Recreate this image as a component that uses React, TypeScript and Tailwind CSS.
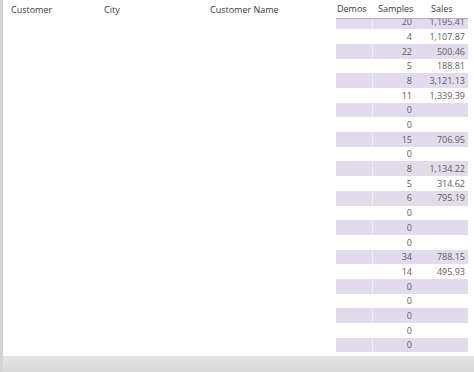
const rows: [string, string][] = [
  ['20', '1,195.41'],
  ['4', '1,107.87'],
  ['22', '500.46'],
  ['5', '188.81'],
  ['8', '3,121.13'],
  ['11', '1,339.39'],
  ['0', ''],
  ['0', ''],
  ['15', '706.95'],
  ['0', ''],
  ['8', '1,134.22'],
  ['5', '314.62'],
  ['6', '795.19'],
  ['0', ''],
  ['0', ''],
  ['0', ''],
  ['34', '788.15'],
  ['14', '495.93'],
  ['0', ''],
  ['0', ''],
  ['0', ''],
  ['0', ''],
  ['0', ''],
]

const cols = 'grid grid-cols-[93px_106px_134px_37px_43px_52px]'

export default function App() {
  return (
    <div
      className="flex w-[474px] h-[372px] bg-white overflow-hidden text-[9px]"
      style={{ fontFamily: '"Open Sans", "Noto Sans", sans-serif' }}
    >
      {/* left frame edge */}
      <div className="w-[3px] h-full bg-[#d4d4d4]" />

      <div className="flex flex-col flex-1">
        <div className="flex flex-col h-[355px]">
          {/* header */}
          <div className={`${cols} h-[19px] items-center text-[#3b3a39]`}>
            <div className="pl-[8px]">Customer</div>
            <div className="pl-[8px]">City</div>
            <div className="pl-[8px]">Customer Name</div>
            <div className="pl-[1px] h-full flex items-center border-b border-[#b5aac8]">Demos</div>
            <div className="pl-[5px] h-full flex items-center border-b border-[#b5aac8]">Samples</div>
            <div className="pl-[15px] h-full flex items-center border-b border-[#b5aac8]">Sales</div>
          </div>

          {/* body, scrolled a few pixels */}
          <div className="flex-1 overflow-hidden">
            <div className="-mt-[4.4px] text-[#605e5c]">
              {rows.map(([samples, sales], i) => {
                const bg = i % 2 === 0 ? 'bg-[#e1dbeb]' : 'bg-white'
                return (
                  <div key={i} className={`${cols} h-[14.7px] items-center`}>
                    <div />
                    <div />
                    <div />
                    <div className={`${bg} h-full border-r border-white/50`} />
                    <div className={`${bg} h-full flex items-center justify-end pr-[4px]`}>{samples}</div>
                    <div className={`${bg} h-full flex items-center justify-end pr-[3px]`}>{sales}</div>
                  </div>
                )
              })}
            </div>
          </div>
        </div>

        {/* bottom frame */}
        <div className="flex-1 border-t border-white bg-gradient-to-b from-[#e4e4e4] to-[#d9d9d9]" />
      </div>
    </div>
  )
}
